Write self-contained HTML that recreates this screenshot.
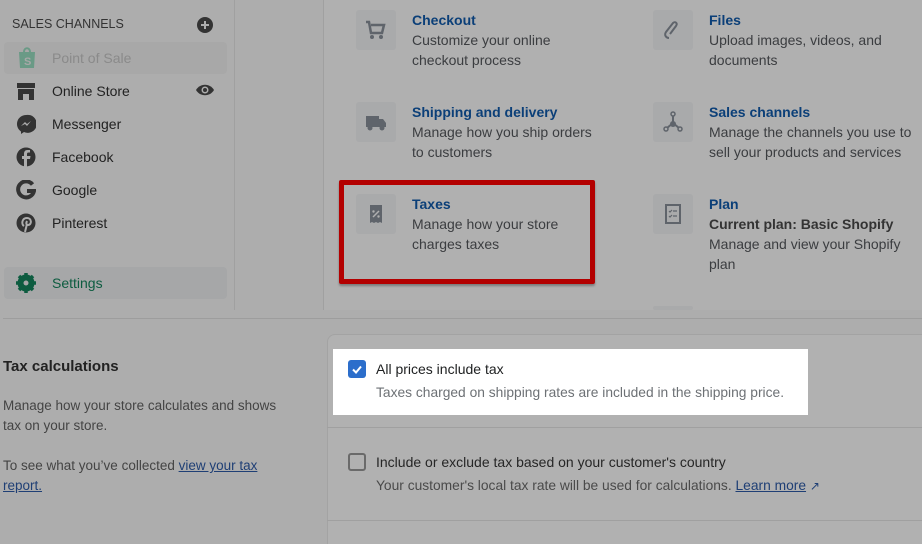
<!DOCTYPE html>
<html><head><meta charset="utf-8"><style>
*{margin:0;padding:0;box-sizing:border-box}
body{width:922px;height:533px;overflow:hidden;background:#adadad;font-family:"Liberation Sans",sans-serif;font-size:14px;color:#262626;position:relative}
.a{position:absolute}
.side{left:0;top:0;width:235px;height:310px;background:#adadad;border-right:1px solid #a0a0a0}
.mid{left:236px;top:0;width:88px;height:310px;border-right:1px solid #a0a0a0;background:#adadad}
.top{left:324px;top:0;width:598px;height:310px;background:#b0b0b0}
.item{left:4px;width:223px;height:32px;border-radius:4px}
.lbl{left:52px;font-size:14px;color:#222}
.box{width:40px;height:40px;background:#a9aaab;border-radius:3px}
.t{color:#0b3f78;font-weight:bold;font-size:14px;line-height:20px}
.d{color:#3b3d40;line-height:20px}
</style></head><body>
<div class="a side"></div>
<div class="a mid"></div>
<div class="a top"></div>
<div class="a" style="left:12px;top:17px;font-size:12.5px;color:#333">SALES CHANNELS</div>
<svg class="a" style="left:196px;top:16px" width="18" height="18"><circle cx="9" cy="9" r="8" fill="#333"/><path d="M9 5v8M5 9h8" stroke="#adadad" stroke-width="2"/></svg>
<div class="a item" style="top:42px;background:#a8a8a8"></div>
<svg class="a" style="left:16px;top:46px" width="22" height="24"><path d="M3 6h16l-1 16H4z" fill="#6a9a86"/><path d="M8 6c0-5 6-5 6 0" stroke="#6a9a86" stroke-width="2" fill="none"/><text x="8" y="19" font-size="11" font-weight="bold" fill="#a8a8a8" font-family="Liberation Sans">S</text></svg>
<div class="a lbl" style="top:50px;color:#8a8a8a">Point of Sale</div>
<svg class="a" style="left:16px;top:81px" width="20" height="20"><path d="M1 2h18v5H1z" fill="#333"/><path d="M2 8h16v11h-5v-6H7v6H2z" fill="#333"/></svg>
<div class="a lbl" style="top:83px">Online Store</div>
<svg class="a" style="left:195px;top:82px" width="20" height="16"><path d="M1 8C5 1 15 1 19 8 15 15 5 15 1 8z" fill="#333"/><circle cx="10" cy="8" r="3.5" fill="#adadad"/><circle cx="10" cy="8" r="2" fill="#333"/></svg>
<svg class="a" style="left:16px;top:114px" width="20" height="20"><path d="M10 1a9 9 0 0 0-5 16.5V20l3-2a9 9 0 1 0 2-17z" fill="#333"/><path d="M5 12l4-4 2 2 4-3-4 5-2-2z" fill="#adadad"/></svg>
<div class="a lbl" style="top:116px">Messenger</div>
<svg class="a" style="left:16px;top:147px" width="20" height="20"><circle cx="10" cy="10" r="9.5" fill="#333"/><path d="M11 20v-8h3l.5-3H11V7c0-1 .5-1.5 1.5-1.5H14V3h-2.5C9 3 8 4.5 8 7v2H6v3h2v8z" fill="#adadad"/></svg>
<div class="a lbl" style="top:149px">Facebook</div>
<svg class="a" style="left:16px;top:180px" width="20" height="20"><path d="M16.5 4.5A8 8 0 1 0 18 11h-7" stroke="#333" stroke-width="4" fill="none"/></svg>
<div class="a lbl" style="top:182px">Google</div>
<svg class="a" style="left:16px;top:213px" width="20" height="20"><circle cx="10" cy="10" r="9.5" fill="#333"/><path d="M9 19l2-8M8 13C5 11 6 5 11 5s5 7 1 7c-2 0-2-2-1-4" stroke="#adadad" stroke-width="2" fill="none"/></svg>
<div class="a lbl" style="top:215px">Pinterest</div>
<div class="a item" style="top:267px;background:#a6a7a8"></div>
<svg class="a" style="left:16px;top:273px" width="20" height="20"><circle cx="10" cy="10" r="6.5" fill="none" stroke="#0d5c40" stroke-width="4"/><path d="M10 0v20M0 10h20M3 3l14 14M17 3L3 17" stroke="#0d5c40" stroke-width="3.5"/><circle cx="10" cy="10" r="2.5" fill="#a6a7a8"/></svg>
<div class="a lbl" style="top:275px;color:#0d5c40">Settings</div>

<div class="a box" style="left:356px;top:10px"></div>
<svg class="a" style="left:364px;top:18px" width="24" height="24"><path d="M2 4h3l2 11h11l2-8H7" stroke="#5f646b" stroke-width="2.5" fill="none"/><circle cx="8" cy="19" r="2" fill="#5f646b"/><circle cx="17" cy="19" r="2" fill="#5f646b"/></svg>
<div class="a" style="left:412px;top:10px"><div class="t">Checkout</div><div class="d">Customize your online<br>checkout process</div></div>
<div class="a box" style="left:653px;top:10px"></div>
<svg class="a" style="left:661px;top:18px" width="24" height="24"><path d="M8 20c-3 0-5-3-3-6l7-9c2-2 5 0 3 3l-6 8" stroke="#5f646b" stroke-width="2" fill="none"/></svg>
<div class="a" style="left:709px;top:10px"><div class="t">Files</div><div class="d">Upload images, videos, and<br>documents</div></div>

<div class="a box" style="left:356px;top:102px"></div>
<svg class="a" style="left:364px;top:110px" width="24" height="24"><path d="M2 6h13v11H2zM15 9h4l3 4v4h-7z" fill="#5f646b"/><circle cx="6" cy="18" r="2.5" fill="#5f646b"/><circle cx="18" cy="18" r="2.5" fill="#5f646b"/></svg>
<div class="a" style="left:412px;top:102px"><div class="t">Shipping and delivery</div><div class="d">Manage how you ship orders<br>to customers</div></div>
<div class="a box" style="left:653px;top:102px"></div>
<svg class="a" style="left:661px;top:110px" width="24" height="24"><circle cx="12" cy="4" r="2" stroke="#5f646b" stroke-width="1.5" fill="none"/><path d="M12 6v7M12 13l-6 5M12 13l6 5" stroke="#5f646b" stroke-width="2"/><circle cx="12" cy="14" r="3" fill="#5f646b"/><circle cx="5" cy="19" r="2" stroke="#5f646b" stroke-width="1.5" fill="none"/><circle cx="19" cy="19" r="2" stroke="#5f646b" stroke-width="1.5" fill="none"/></svg>
<div class="a" style="left:709px;top:102px"><div class="t">Sales channels</div><div class="d">Manage the channels you use to<br>sell your products and services</div></div>

<div class="a box" style="left:356px;top:194px"></div>
<svg class="a" style="left:364px;top:202px" width="24" height="24"><path d="M6 3h12v18l-2-1-2 1-2-1-2 1-2-1-2 1z" fill="#5f646b"/><path d="M9 15l6-6" stroke="#b0b0b0" stroke-width="1.5"/><circle cx="9.5" cy="9.5" r="1.2" fill="#b0b0b0"/><circle cx="14.5" cy="14.5" r="1.2" fill="#b0b0b0"/></svg>
<div class="a" style="left:412px;top:194px"><div class="t">Taxes</div><div class="d">Manage how your store<br>charges taxes</div></div>
<div class="a" style="left:339px;top:180px;width:256px;height:104px;border:5px solid #b30000;border-radius:2px;box-shadow:0 2px 2px rgba(0,0,0,.3)"></div>
<div class="a box" style="left:653px;top:194px"></div>
<svg class="a" style="left:661px;top:202px" width="24" height="24"><rect x="5" y="3" width="14" height="18" stroke="#5f646b" stroke-width="2" fill="none"/><path d="M8 9l1 1 2-2M8 14l1 1 2-2M12 9h4M12 14h4" stroke="#5f646b" stroke-width="1.2" fill="none"/></svg>
<div class="a" style="left:709px;top:194px"><div class="t">Plan</div><div class="d" style="font-weight:bold;color:#333">Current plan: Basic Shopify</div><div class="d">Manage and view your Shopify<br>plan</div></div>
<div class="a box" style="left:653px;top:306px;height:4px"></div>

<div class="a" style="left:3px;top:318px;width:919px;height:1px;background:#9d9d9d"></div>
<div class="a" style="left:3px;top:358px;font-size:15px;font-weight:bold;color:#222">Tax calculations</div>
<div class="a d" style="left:3px;top:396px;color:#444;font-size:13.5px">Manage how your store calculates and shows<br>tax on your store.</div>
<div class="a d" style="left:3px;top:456px;color:#444;font-size:13.5px">To see what you’ve collected <u style="color:#1f3f75">view your tax</u><br><u style="color:#1f3f75">report.</u></div>

<div class="a" style="left:327px;top:334px;width:600px;height:210px;background:#b1b1b1;border-radius:8px 0 0 0;border-left:1px solid #a3a3a3;border-top:1px solid #a3a3a3"></div>
<div class="a" style="left:333px;top:349px;width:475px;height:66px;background:#fff"></div>
<div class="a" style="left:348px;top:360px;width:18px;height:18px;border-radius:3px;background:#2c6ecb"></div>
<svg class="a" style="left:348px;top:360px" width="18" height="18"><path d="M5 9.5l3 3 5-6" stroke="#fff" stroke-width="2" fill="none"/></svg>
<div class="a" style="left:376px;top:361px;color:#202223">All prices include tax</div>
<div class="a" style="left:376px;top:385px;color:#6d7175;font-size:13.8px">Taxes charged on shipping rates are included in the shipping price.</div>
<div class="a" style="left:327px;top:427px;width:595px;height:1px;background:#a0a0a0"></div>
<div class="a" style="left:348px;top:453px;width:18px;height:18px;border-radius:3px;border:2px solid #6a6a6a"></div>
<div class="a" style="left:376px;top:454px;color:#262626">Include or exclude tax based on your customer's country</div>
<div class="a" style="left:376px;top:478px;color:#4a4a4a;font-size:13.8px">Your customer's local tax rate will be used for calculations. <u style="color:#1f3f75">Learn more</u> <span style="color:#1f3f75;font-size:12px">&#x2197;</span></div>
<div class="a" style="left:327px;top:520px;width:595px;height:1px;background:#a0a0a0"></div>
</body></html>
